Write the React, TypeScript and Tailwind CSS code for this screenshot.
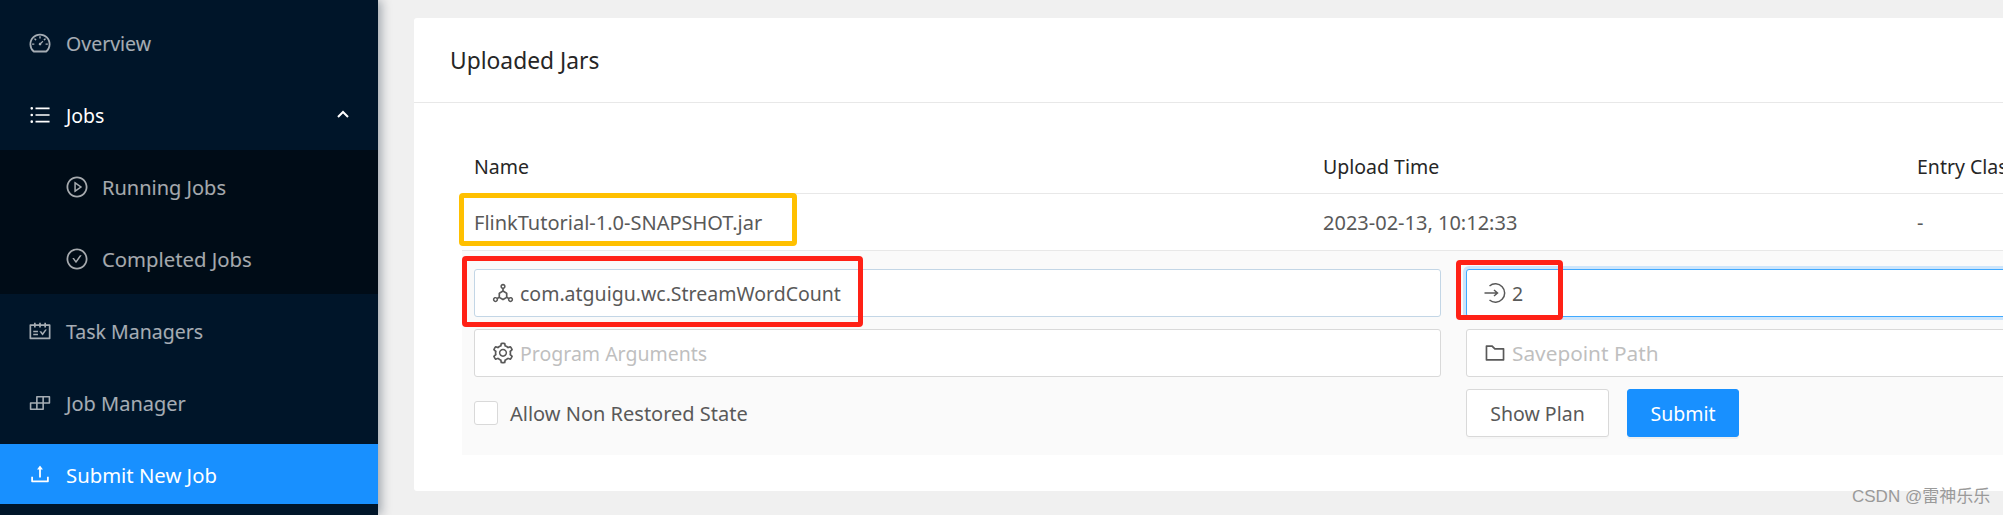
import React from "react";
import {
  AiOutlineDashboard, AiOutlineUnorderedList, AiOutlinePlayCircle, AiOutlineCheckCircle,
  AiOutlineSchedule, AiOutlineBuild, AiOutlineUpload, AiOutlineDeploymentUnit, AiOutlineSetting, AiOutlineFolder,
} from "react-icons/ai";

function NavItem({ icon, label, active, white, sub, right, className = "", labelClass = "" }: any) {
  return (
    <div className={`h-[60px] flex items-center ${sub ? "pl-[65px]" : "pl-[28px]"} ${active ? "bg-[#1890ff] text-white" : white ? "text-white" : "text-white/65"} ${className}`}>
      <span className={`w-[24px] flex justify-center text-[24px] ${sub ? "mr-[13px]" : "mr-[14px]"}`}>{icon}</span>
      <span className={`pt-[2px] ${labelClass}`}>{label}</span>
      {right && <span className="ml-auto mr-[29px] flex">{right}</span>}
    </div>
  );
}

function Chevron() {
  return (
    <svg viewBox="0 0 12 8" className="w-[12px] h-[8px] -mt-[2px]" fill="none" stroke="currentColor" strokeWidth="2">
      <path d="M1 7 L6 2 L11 7" />
    </svg>
  );
}

function ParallelIcon() {
  return (
    <svg viewBox="0 0 22 22" className="w-[22px] h-[22px]" fill="none" stroke="currentColor" strokeWidth="1.5">
      <path d="M5.5 4 A9.2 9.2 0 1 1 5.5 18" />
      <path d="M0.5 11 H13 M10 8 L13.5 11 L10 14" />
    </svg>
  );
}

function Field({ icon, children, placeholder, focus, hover, textClass = "" }: any) {
  const border = focus
    ? "border-[#40a9ff] shadow-[0_0_0_3px_rgba(24,144,255,0.2)]"
    : hover
      ? "border-[#c3d6e6]"
      : "border-[#d9d9d9]";
  return (
    <div className={`h-[48px] rounded-[3px] bg-white flex items-center pl-[16px] border ${border}`}>
      <span className="w-[24px] flex justify-center text-[24px] text-[#595959] mr-[5px]">{icon}</span>
      <span className={`pt-[2px] ${placeholder ? "text-[#bfbfbf]" : "text-[#595959]"} ${textClass}`}>{children}</span>
    </div>
  );
}

export default function App() {
  return (
    <div className="w-[2003px] h-[515px] overflow-hidden flex bg-[#f0f0f0] relative text-[19.5px] font-['Noto_Sans','Open_Sans',sans-serif]">
      <aside className="w-[378px] h-full shrink-0 bg-[#001529] pt-[13px] shadow-[3px_0_10px_rgba(0,21,41,0.35)] z-10">
        <NavItem icon={<AiOutlineDashboard />} label="Overview" className="mb-3" />
        <NavItem icon={<AiOutlineUnorderedList />} label="Jobs" white right={<Chevron />} className="mb-[5px]" />
        <div className="bg-[#000c17] pt-[7px] pb-[5px] flex flex-col gap-3">
          <NavItem sub icon={<AiOutlinePlayCircle />} label="Running Jobs" labelClass="text-[20px]" />
          <NavItem sub icon={<AiOutlineCheckCircle />} label="Completed Jobs" labelClass="text-[20.3px] -mt-[1px]" />
        </div>
        <div className="pt-[7px] flex flex-col gap-3">
          <NavItem icon={<AiOutlineSchedule />} label="Task Managers" />
          <NavItem icon={<AiOutlineBuild />} label="Job Manager" labelClass="text-[20px]" />
          <NavItem active icon={<AiOutlineUpload />} label="Submit New Job" labelClass="text-[20.3px]" className="-mt-px" />
        </div>
      </aside>

      <main className="flex-1 min-w-0 overflow-hidden pl-[36px] pt-[18px]">
        <section className="w-[1800px] h-[473px] bg-white rounded-[3px]">
          <header className="h-[85px] border-b border-[#e8e8e8] flex items-center pl-[36px] pt-[2px] text-[22.8px] text-[#262626]">Uploaded Jars</header>
          <div className="pl-[48px] pt-[38px]">
            <div className="grid grid-cols-[861px_594px_1fr] h-[53px] items-center border-b border-[#e8e8e8] text-[#262626]">
              <div className="pl-3">Name</div>
              <div>Upload Time</div>
              <div>Entry Class</div>
            </div>
            <div className="grid grid-cols-[861px_594px_1fr] h-[57px] pt-[2px] items-center border-b border-[#e8e8e8] text-[#595959] text-[20px]">
              <div className="pl-3">FlinkTutorial-1.0-SNAPSHOT.jar</div>
              <div>2023-02-13, 10:12:33</div>
              <div>-</div>
            </div>
            <div className="bg-[#fafafa] h-[204px] pt-[18px] pl-3 grid grid-cols-[967px_1fr] gap-x-[25px] gap-y-3 content-start">
              <Field hover icon={<AiOutlineDeploymentUnit />}>com.atguigu.wc.StreamWordCount</Field>
              <Field focus icon={<ParallelIcon />}>2</Field>
              <Field placeholder icon={<AiOutlineSetting />}>Program Arguments</Field>
              <Field placeholder icon={<AiOutlineFolder />} textClass="text-[20.8px]">Savepoint Path</Field>
              <div className="h-[48px] flex items-center text-[#595959] text-[20px]">
                <span className="w-[24px] h-[24px] bg-white border border-[#d9d9d9] rounded-[3px] mr-[12px]" />
                <span className="pt-[2px]">Allow Non Restored State</span>
              </div>
              <div className="h-[48px] flex gap-[18px]">
                <button className="w-[143px] h-full pt-[2px] bg-white border border-[#d9d9d9] rounded-[3px] text-[#595959] shadow-[0_2px_0_rgba(0,0,0,0.015)]">Show Plan</button>
                <button className="w-[112px] h-full pt-[2px] bg-[#1890ff] border border-[#1890ff] rounded-[3px] text-white shadow-[0_2px_0_rgba(0,0,0,0.045)]">Submit</button>
              </div>
            </div>
          </div>
        </section>
      </main>

      <div className="absolute left-[459px] top-[193px] w-[338px] h-[53px] border-[5px] border-[#ffc000] rounded-[4px] z-20" />
      <div className="absolute left-[462px] top-[256px] w-[401px] h-[71px] border-[5px] border-[#ff2116] rounded-[4px] z-20" />
      <div className="absolute left-[1456px] top-[260px] w-[107px] h-[60px] border-[5px] border-[#ff2116] rounded-[4px] z-20" />
      <div className="absolute left-[1852px] top-[484px] text-[#9a9a9a] text-[17px] leading-[26px] z-20 font-['Liberation_Sans','Noto_Sans_CJK_SC',sans-serif]">CSDN @雷神乐乐</div>
    </div>
  );
}
